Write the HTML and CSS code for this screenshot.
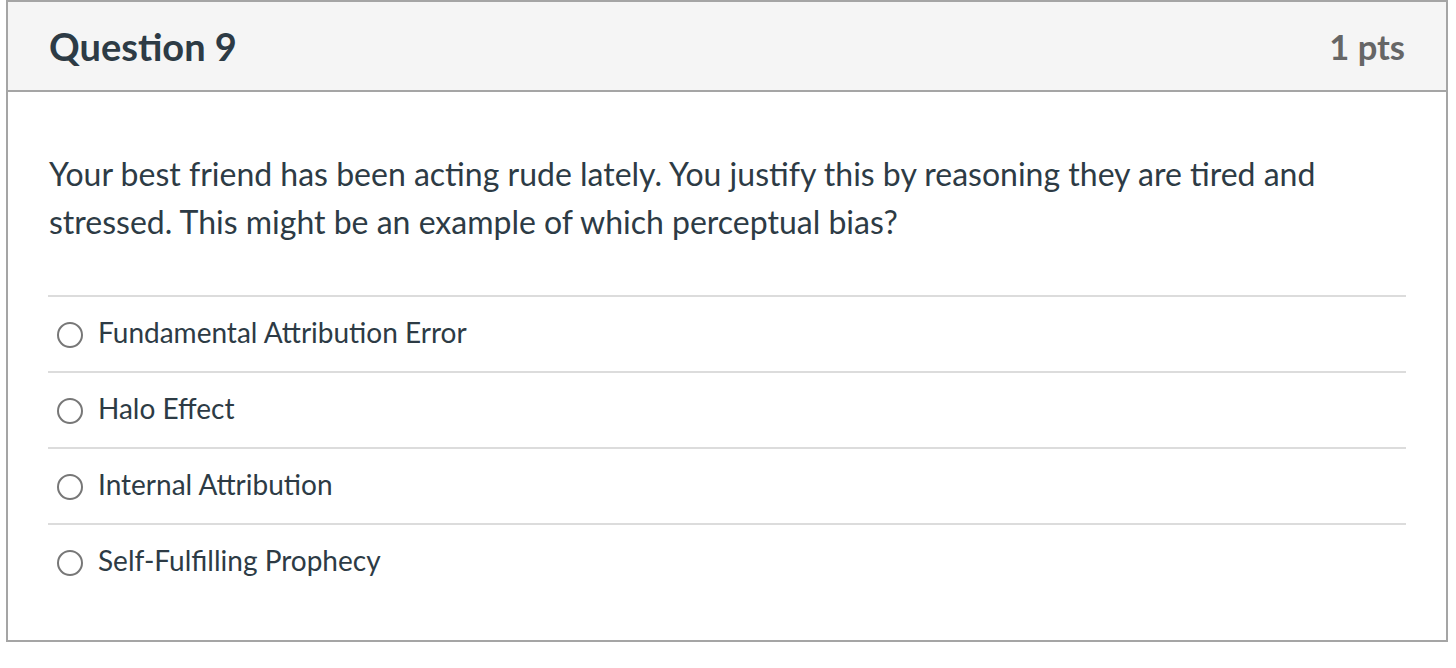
FILE: index.html
```html
<!DOCTYPE html>
<html lang="en">
<head>
<meta charset="utf-8">
<title>Question 9</title>
<link rel="stylesheet" href="styles.css">
</head>
<body>
<div class="question">
  <div class="question-header">
    <h2 class="question-title">Question 9</h2>
    <span class="question-points">1 pts</span>
  </div>
  <div class="question-body">
    <p class="question-text">Your best friend has been acting rude lately. You justify this by reasoning they are tired and stressed. This might be an example of which perceptual bias?</p>
    <div class="answers">
      <label class="answer"><span class="radio"></span><span class="answer-label">Fundamental Attribution Error</span></label>
      <label class="answer"><span class="radio"></span><span class="answer-label">Halo Effect</span></label>
      <label class="answer"><span class="radio"></span><span class="answer-label">Internal Attribution</span></label>
      <label class="answer"><span class="radio"></span><span class="answer-label">Self-Fulfilling Prophecy</span></label>
    </div>
  </div>
</div>
</body>
</html>
```

FILE: styles.css
```css
html, body {
  margin: 0;
  padding: 0;
  background: #ffffff;
}

body {
  font-family: Lato, "Open Sans", sans-serif;
  color: #2d3b45;
  font-feature-settings: "liga" 1;
}

.question {
  margin-left: 6px;
  width: 1442px;
  box-sizing: border-box;
  border: 2px solid #a5a5a5;
}

.question-header {
  display: flex;
  justify-content: space-between;
  align-items: center;
  height: 88px;
  padding: 0 41px;
  background: #f5f5f5;
  border-bottom: 2px solid #a5a5a5;
}

.question-title {
  margin: 0;
  font-size: 38px;
  font-weight: 700;
  color: #2d3b45;
}

.question-points {
  font-size: 34.5px;
  font-weight: 700;
  color: #666666;
}

.question-body {
  padding: 58px 40px 41px;
}

.question-text {
  margin: 0 0 49px 1px;
  font-size: 32px;
  line-height: 48px;
}

.answers {
  display: flex;
  flex-direction: column;
}

.answer {
  display: flex;
  align-items: center;
  gap: 15px;
  height: 74px;
  box-sizing: content-box;
  padding: 0 0 0 9px;
  border-top: 2px solid #dcdcdc;
  font-size: 28px;
}

.answer-label {
  margin-bottom: 4px;
}

.radio {
  width: 22px;
  height: 22px;
  margin-top: 2px;
  border: 2px solid #777777;
  border-radius: 50%;
  flex: none;
}
```
